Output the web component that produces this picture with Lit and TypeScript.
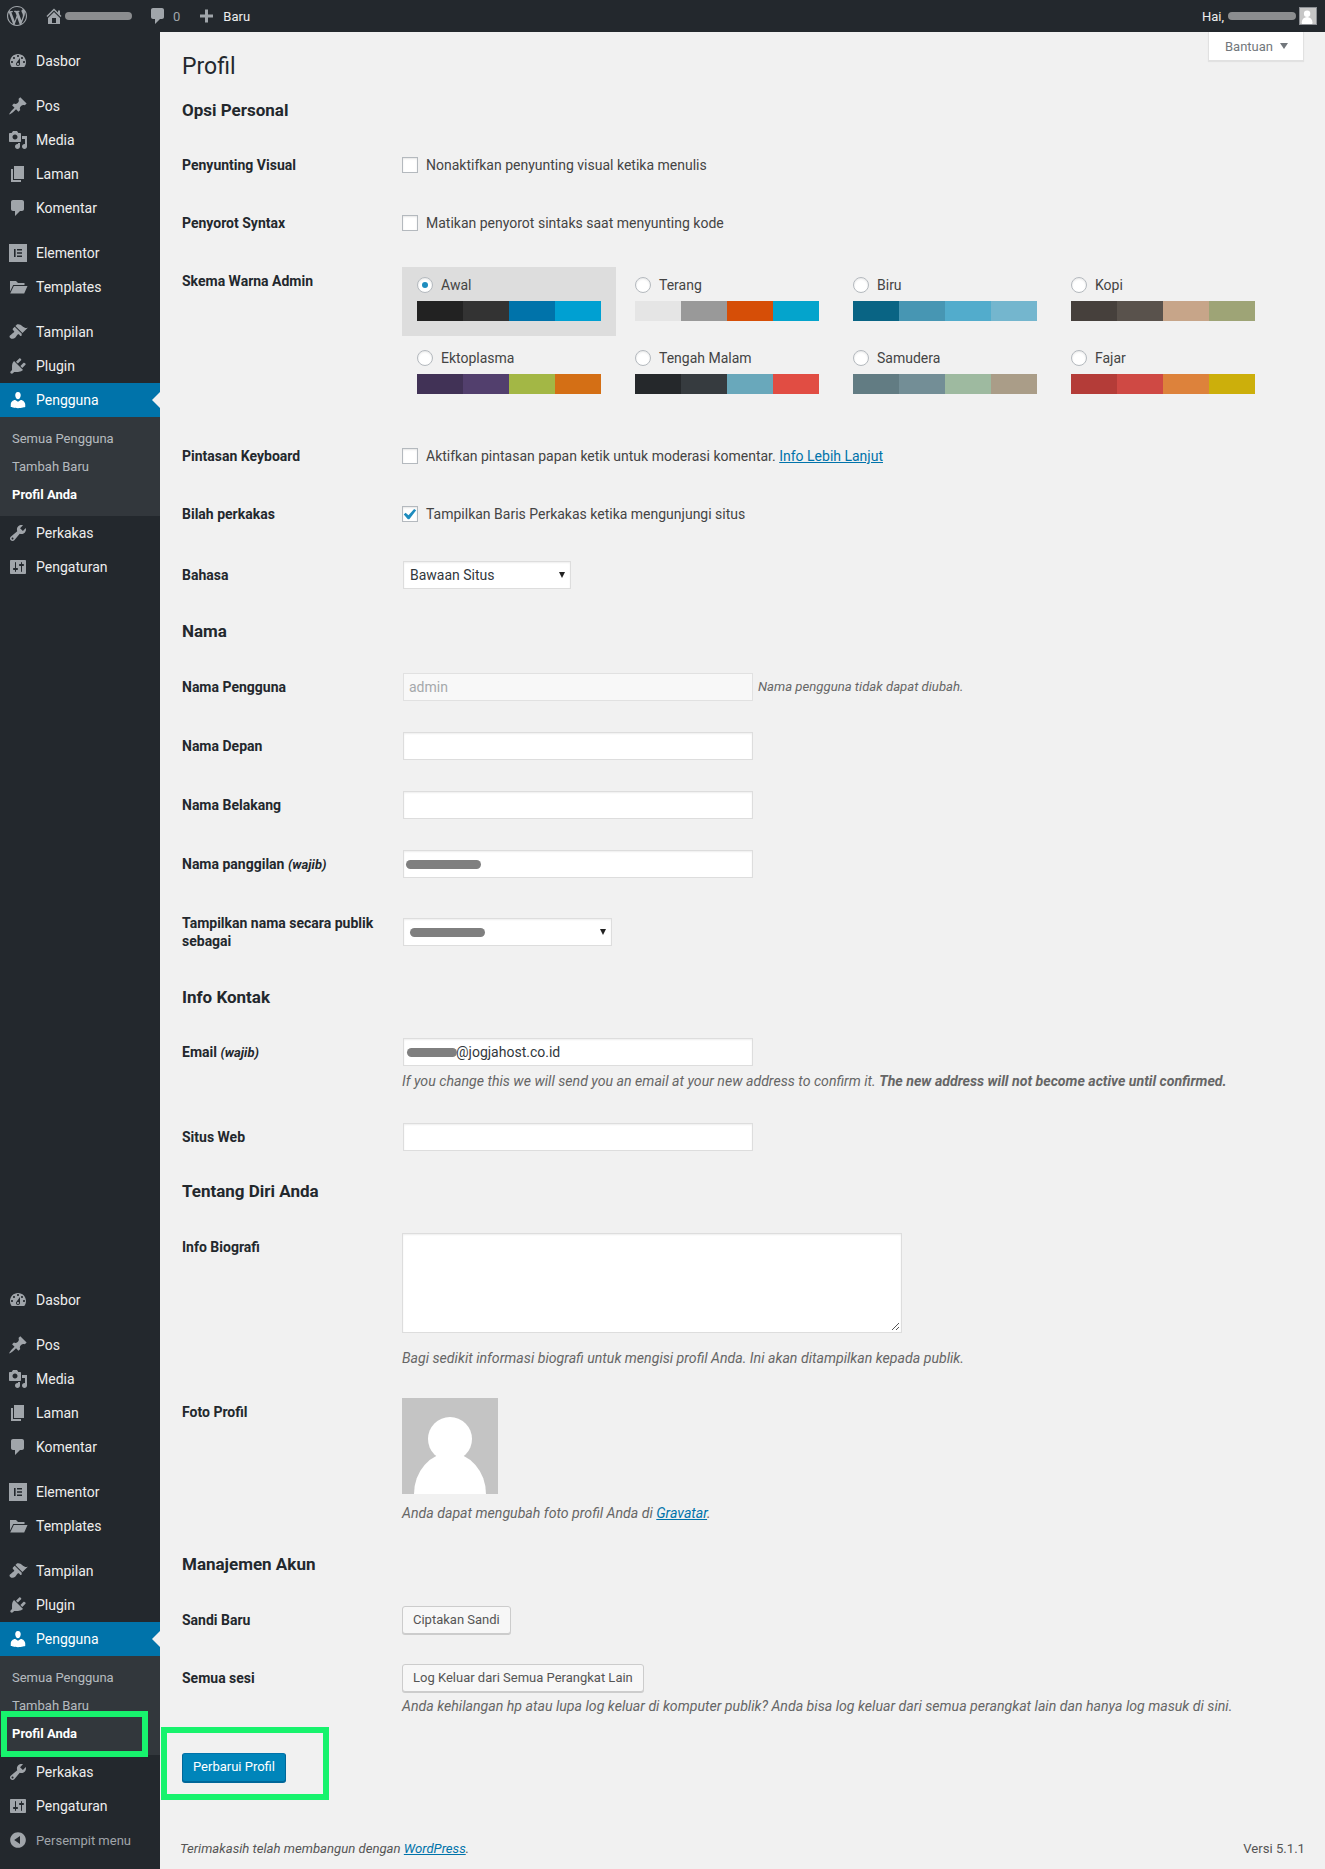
import { LitElement, html, css, svg } from "lit";
import { customElement } from "lit/decorators.js";

const P: Record<string, string> = {
  wp: "M20 10c0-5.51-4.49-10-10-10C4.48 0 0 4.49 0 10c0 5.52 4.48 10 10 10 5.51 0 10-4.48 10-10zM7.78 15.37L4.37 6.22c.55-.02 1.17-.08 1.17-.08.5-.06.44-1.13-.06-1.11 0 0-1.45.11-2.37.11-.18 0-.37 0-.58-.01C4.12 2.69 6.87 1.11 10 1.11c2.33 0 4.45.87 6.05 2.34-.68-.11-1.65.39-1.65 1.58 0 .74.45 1.36.9 2.1.35.61.55 1.36.55 2.46 0 1.49-1.4 5-1.4 5l-3.03-8.37c.54-.02.82-.17.82-.17.5-.05.44-1.25-.06-1.22 0 0-1.44.12-2.38.12-.87 0-2.33-.12-2.33-.12-.5-.03-.56 1.2-.06 1.22l.92.08 1.26 3.41zM17.41 10c.24-.64.74-1.87.43-4.25.7 1.29 1.05 2.71 1.05 4.25 0 3.29-1.73 6.24-4.4 7.78.97-2.59 1.94-5.2 2.92-7.78zM6.1 18.09C3.12 16.65 1.11 13.53 1.11 10c0-1.3.23-2.48.72-3.59C3.25 10.3 4.67 14.2 6.1 18.09zm4.03-6.63l2.58 6.98c-.86.29-1.76.45-2.71.45-.79 0-1.57-.11-2.29-.33.81-2.38 1.62-4.74 2.42-7.1z",
  dash: "M3.76 16h12.48c1.1-1.37 1.76-3.11 1.76-5 0-4.42-3.58-8-8-8s-8 3.58-8 8c0 1.89.66 3.63 1.76 5zM10 4c.55 0 1 .45 1 1s-.45 1-1 1-1-.45-1-1 .45-1 1-1zM6 6c.55 0 1 .45 1 1s-.45 1-1 1-1-.45-1-1 .45-1 1-1zm8 0c.55 0 1 .45 1 1s-.45 1-1 1-1-.45-1-1 .45-1 1-1zm-5.37 5.55L12 7v6c0 1.1-.9 2-2 2s-2-.9-2-2c0-.57.24-1.08.63-1.45zM4 10c.55 0 1 .45 1 1s-.45 1-1 1-1-.45-1-1 .45-1 1-1zm12 0c.55 0 1 .45 1 1s-.45 1-1 1-1-.45-1-1 .45-1 1-1zm-5 3c0-.55-.45-1-1-1s-1 .45-1 1 .45 1 1 1 1-.45 1-1z",
  post: "M10.44 3.02l1.82-1.82 6.36 6.35-1.83 1.82c-1.05-.68-2.48-.57-3.41.36l-.75.75c-.92.93-1.04 2.35-.35 3.41l-1.83 1.82-2.41-2.41-2.8 2.79c-.42.42-3.38 2.71-3.8 2.29s1.86-3.39 2.28-3.81l2.79-2.79L4.1 9.36l1.83-1.82c1.05.69 2.48.57 3.4-.36l.75-.75c.93-.92 1.05-2.35.36-3.41z",
  media: "M13 11V4c0-.55-.45-1-1-1h-1.67L9 1H5L3.67 3H2c-.55 0-1 .45-1 1v7c0 .55.45 1 1 1h10c.55 0 1-.45 1-1zM7 4.5c1.38 0 2.5 1.12 2.5 2.5S8.38 9.5 7 9.5 4.5 8.38 4.5 7 5.62 4.5 7 4.5zM14 6h5v10.5c0 1.38-1.12 2.5-2.5 2.5S14 17.88 14 16.5s1.12-2.5 2.5-2.5c.17 0 .34.02.5.05V9h-3V6zm-4 8.05V13h2v3.5c0 1.38-1.12 2.5-2.5 2.5S7 17.88 7 16.5 8.12 14 9.5 14c.17 0 .34.02.5.05z",
  page: "M6 15V2h10v13H6zm-1 1h8v2H3V5h2v11z",
  comment: "M5 2h9c1.1 0 2 .9 2 2v7c0 1.1-.9 2-2 2h-2l-5 5v-5H5c-1.1 0-2-.9-2-2V4c0-1.1.9-2 2-2z",
  elementor: "M1 1h18v18H1zM6 6v8h1.6V6zM9 6v1.6h5V6zM9 9.2v1.6h5V9.2zM9 12.4V14h5v-1.6z",
  folder: "M2 4h6l2 2h6.5v2H5.2L2 14.5zM5.8 9H19.5l-3.3 7.5H2.2z",
  appearance: "M14.48 11.06L7.41 3.99l1.5-1.5c.5-.56 2.3-.47 3.51.32 1.21.8 1.43 1.28 2.91 2.1 1.18.64 2.45 1.26 4.45.85zm-.71.71L6.7 4.7 4.93 6.47c-.39.39-.39 1.02 0 1.41l1.06 1.06c.39.39.39 1.03 0 1.42-.6.6-1.43 1.11-2.21 1.69-.35.26-.7.53-1.01.84C1.43 13.23.99 14.77 2.28 16s3.5 1.16 4.87-.2c.31-.31.58-.66.84-1.02.58-.78 1.09-1.61 1.69-2.21.39-.39 1.02-.39 1.41 0l1.06 1.06c.39.39 1.02.39 1.41 0z",
  plugin: "M13.11 4.36L9.87 7.6 8 5.73l3.24-3.24c.35-.34 1.05-.2 1.56.32.52.51.66 1.21.31 1.55zm-8 1.77l.91-1.12 9.01 9.01-1.19.84c-.71.71-2.63 1.16-3.82 1.16H6.14L4.9 17.26c-.59.59-1.54.59-2.12 0-.59-.58-.59-1.53 0-2.12l1.24-1.24v-3.88c0-1.13.4-3.19 1.09-3.89zm7.26 3.97l3.24-3.24c.34-.35 1.04-.21 1.55.31.52.51.66 1.21.31 1.55l-3.24 3.25z",
  users: "M10 9.25c-2.27 0-2.73-3.44-2.73-3.44C7 4.02 7.82 2 9.97 2c2.16 0 2.98 2.02 2.71 3.81 0 0-.41 3.44-2.68 3.44zm0 2.57L12.72 10c2.39 0 4.52 2.33 4.52 4.53v2.49s-3.65 1.13-7.24 1.13c-3.65 0-7.24-1.13-7.24-1.13v-2.49c0-2.25 1.94-4.48 4.47-4.48z",
  tools: "M16.68 9.77c-1.34 1.34-3.3 1.67-4.95.99l-5.41 6.52c-.99.99-2.59.99-3.58 0s-.99-2.59 0-3.57l6.52-5.42c-.68-1.65-.35-3.61.99-4.95 1.28-1.28 3.12-1.62 4.72-1.06l-2.89 2.89 2.82 2.82 2.86-2.87c.53 1.58.18 3.39-1.08 4.65zM3.81 16.21c.4.39 1.04.39 1.43 0 .4-.4.4-1.04 0-1.43-.39-.4-1.03-.4-1.43 0-.39.39-.39 1.03 0 1.43z",
  settings: "M18 16V4c0-.55-.45-1-1-1H3c-.55 0-1 .45-1 1v12c0 .55.45 1 1 1h14c.55 0 1-.45 1-1zM8 11h1c.55 0 1 .45 1 1s-.45 1-1 1H8v1.5c0 .28-.22.5-.5.5s-.5-.22-.5-.5V13H6c-.55 0-1-.45-1-1s.45-1 1-1h1V5.5c0-.28.22-.5.5-.5s.5.22.5.5V11zm5-2h-1c-.55 0-1-.45-1-1s.45-1 1-1h1V5.5c0-.28.22-.5.5-.5s.5.22.5.5V7h1c.55 0 1 .45 1 1s-.45 1-1 1h-1v5.5c0 .28-.22.5-.5.5s-.5-.22-.5-.5V9z",
  collapse: "M10 2.16c4.33 0 7.84 3.51 7.84 7.84s-3.51 7.84-7.84 7.84S2.16 14.33 2.16 10 5.71 2.16 10 2.16zm2 11.72V6.12L6.18 9.97z",
  home: "M16 8.5l1.53 1.53-1.06 1.06L10 4.62l-6.47 6.47-1.06-1.06L10 2.5l4 4v-2h2v4zm-6-2.46l6 5.99V18H4v-5.97zM12 17v-5H8v5h4z",
  plus: "M17 8.5v3h-5v5H9v-5H4v-3h5v-5h3v5h5z",
};

const icon = (name: string) =>
  html`<svg class="ic" viewBox="0 0 20 20" fill="currentColor" aria-hidden="true">${svg`<path fill-rule="evenodd" d=${P[name]}></path>`}</svg>`;

const SCHEMES: [string, string[]][] = [
  ["Awal", ["#222222", "#333333", "#0073aa", "#00a0d2"]],
  ["Terang", ["#e5e5e5", "#999999", "#d64e07", "#04a4cc"]],
  ["Biru", ["#096484", "#4796b3", "#52accc", "#74b6ce"]],
  ["Kopi", ["#46403c", "#59524c", "#c7a589", "#9ea476"]],
  ["Ektoplasma", ["#413256", "#523f6d", "#a3b745", "#d46f15"]],
  ["Tengah Malam", ["#25282b", "#363b3f", "#69a8bb", "#e14d43"]],
  ["Samudera", ["#627c83", "#738e96", "#9ebaa0", "#aa9d88"]],
  ["Fajar", ["#b43c38", "#cf4944", "#dd823b", "#ccaf0b"]],
];

const MENU: (string | [string, string, boolean?])[] = [
  "gap-a",
  ["dash", "Dasbor"],
  "sep",
  ["post", "Pos"],
  ["media", "Media"],
  ["page", "Laman"],
  ["comment", "Komentar"],
  "sep",
  ["elementor", "Elementor"],
  ["folder", "Templates"],
  "sep",
  ["appearance", "Tampilan"],
  ["plugin", "Plugin"],
  ["users", "Pengguna", true],
  "sub",
  ["tools", "Perkakas"],
  ["settings", "Pengaturan"],
];

@customElement("app-root")
export class AppRoot extends LitElement {
  static styles = css`
    :host { display: block; font-family: Roboto, "Liberation Sans", sans-serif; font-size: 14px; color: #444; }
    * { box-sizing: border-box; }
    .shell { position: relative; width: 1325px; height: 1869px; overflow: hidden; background: #f1f1f1; display: flex; flex-direction: column; }
    .ic { width: 20px; height: 20px; flex: none; display: block; }

    .bar { height: 32px; flex: none; background: #23282d; color: #eee; font-size: 13px; display: flex; align-items: center; }
    .bar .wp { margin-left: 7px; color: #a0a5aa; }
    .bar .home { margin-left: 17px; color: #a0a5aa; width: 20px; }
    .bar .cm { margin-left: 16px; width: 20px; color: #a0a5aa; }
    .bar .zero { margin-left: 5px; color: #a0a5aa; }
    .bar .plus { margin-left: 16px; color: #a0a5aa; }
    .bar .baru { margin-left: 7px; }
    .bar .spacer { flex: 1; }
    .pill { display: block; background: #7f7f7f; border-radius: 6px; }
    .bar .p1 { width: 67px; height: 8px; margin-left: 1px; background: #8b8d8f; }
    .bar .p2 { width: 68px; height: 8px; margin: 0 3px 0 4px; background: #8b8d8f; }
    .avatar { width: 18px; height: 18px; margin-right: 8px; background: #c6c6c6; border: 1px solid #8c8f94; overflow: hidden; display: block; }

    .body { flex: 1; display: flex; min-height: 0; }
    .side { width: 160px; flex: none; background: #23282d; color: #eee; display: flex; flex-direction: column; }
    .m { height: 34px; display: flex; align-items: center; padding-left: 8px; gap: 8px; position: relative; flex: none; }
    .m .ic { color: #a0a5aa; }
    .m.on { background: #0073aa; color: #fff; }
    .m.on .ic { color: #fff; }
    .m.on::after { content: ""; position: absolute; right: 0; top: 50%; margin-top: -8px; border: 8px solid transparent; border-right-color: #f1f1f1; border-left: 0; }
    .gap-a { height: 12px; flex: none; }
    .sep { height: 11px; flex: none; }
    .sub { background: #32373c; padding: 8px 0 7px; font-size: 13px; color: rgba(240,245,250,.7); flex: none; height: 99px; }
    .sub div { height: 28px; line-height: 28px; padding-left: 12px; }
    .sub .cur { color: #fff; font-weight: 700; }
    .second { margin-top: 687px; flex: none; }
    .collapse { color: #a0a5aa; font-size: 13px; }

    .main { flex: 1; padding: 0 0 0 22px; position: relative; min-width: 0; }
    .help { position: absolute; right: 21px; top: 0; width: 96px; height: 29px; background: #fff; border: 1px solid #e1e1e1; border-top: 0; box-shadow: 0 1px 1px rgba(0,0,0,.06); color: #72777c; font-size: 13px; display: flex; align-items: center; padding-left: 16px; gap: 7px; }
    .help i { border: 4.5px solid transparent; border-top: 6px solid #72777c; border-bottom: 0; }
    h1 { font-size: 23px; font-weight: 400; color: #23282d; line-height: 29px; margin: 20px 0 0; }
    h2 { font-size: 17px; font-weight: 700; color: #23282d; line-height: 20px; margin: 0; padding: 18px 0 17px; }
    h2.first { padding: 19px 0 16px; }
    h2.t17 { padding: 17px 0 17px; }
    h2.t16 { padding: 16px 0 17px; }
    h2.contact { padding: 17px 0 16px; }
    h2.about { padding: 14px 0 17px; }
    .row { display: grid; grid-template-columns: 220px 1fr; }
    .th { padding: 20px 10px 20px 0; font-weight: 700; color: #23282d; line-height: 18px; }
    .th em { font-size: 13px; }
    .td { padding: 15px 0; min-height: 58px; }
    .row.pb18 .td { padding-bottom: 18px; }
    .row.pt24 .td { padding-top: 24px; }
    .check { display: flex; align-items: center; gap: 8px; height: 28px; color: #444; }
    .box { width: 16px; height: 16px; border: 1px solid #b4b9be; background: #fff; box-shadow: inset 0 1px 2px rgba(0,0,0,.1); flex: none; display: block; }
    .box svg { display: block; width: 14px; height: 14px; }
    a { color: #0073aa; text-decoration: underline; }

    .schemes { display: grid; grid-template-columns: repeat(4, 218px); row-gap: 4px; }
    .scheme { width: 214px; height: 69px; padding: 10px 15px 0; }
    .scheme.sel { background: #dddddd; }
    .scheme .t { display: flex; align-items: center; height: 16px; gap: 8px; margin-bottom: 8px; color: #444; }
    .radio { width: 16px; height: 16px; border-radius: 50%; border: 1px solid #b4b9be; background: #fff; box-shadow: inset 0 1px 2px rgba(0,0,0,.1); display: flex; align-items: center; justify-content: center; }
    .radio i { width: 6px; height: 6px; border-radius: 50%; background: #1e8cbe; }
    .pal { display: flex; height: 20px; }
    .pal span { width: 46px; display: block; }

    .f { position: relative; display: inline-block; vertical-align: top; }
    input, .sel-f select { font: inherit; height: 28px; border: 1px solid #ddd; background: #fff; color: #32373c; box-shadow: inset 0 1px 2px rgba(0,0,0,.07); padding: 3px 5px; margin: 0 0 1px 1px; display: block; border-radius: 0; outline: none; }
    input { width: 350px; }
    input.ro { background: #f8f8f8; color: #a5a8ab; border-color: #e1e1e1; box-shadow: none; }
    input.mail { padding-left: 52px; }
    .red { position: absolute; left: 4px; top: 10px; height: 9px; }
    .r1 { width: 75px; }
    .r2 { width: 75px; left: 8px; }
    .r3 { width: 50px; left: 5px; }
    .sel-f select { appearance: none; -webkit-appearance: none; padding: 2px 6px; margin-bottom: 0; }
    .s1 select { width: 168px; }
    .s2 select { width: 209px; }
    .sel-f::after { content: ""; position: absolute; right: 6px; top: 11px; border: 3.5px solid transparent; border-top: 6px solid #222; border-bottom: 0; }
    .inl { display: flex; align-items: flex-start; height: 29px; }
    .note { font-style: italic; color: #666; }
    .inl .note { font-size: 13.15px; line-height: 28px; margin-left: 5px; }
    p.note { margin: 4px 0 1px; line-height: 20px; font-size: 14.15px; }
    p.note.mail-note { margin: 4px 0 2px; }
    p.note.ta-note { margin: 15px 0 0; }
    p.note.pic-note { margin: 9px 0 0; }
    .ta { width: 500px; height: 100px; background: #fff; border: 1px solid #ddd; box-shadow: inset 0 1px 2px rgba(0,0,0,.07); position: relative; }
    .ta svg { position: absolute; right: 1px; bottom: 1px; width: 10px; height: 10px; }
    .pic { width: 96px; height: 96px; display: block; }
    .btn { display: inline-block; height: 28px; font: 13px/26px Roboto, sans-serif; padding: 0 10px; background: #f7f7f7; border: 1px solid #ccc; border-radius: 3px; box-shadow: 0 1px 0 #ccc; color: #555; }
    .pri { background: #0085ba; border-color: #0073aa #006799 #006799; box-shadow: 0 1px 0 #006799; color: #fff; height: 29px; display: block; width: 104px; padding: 0; text-align: center; }
    .sub-wrap { padding-top: 21px; }
    .foot { position: absolute; left: 20px; right: 20px; top: 1808px; display: flex; justify-content: space-between; font-size: 13.15px; color: #555; line-height: 18px; }
    .foot em a { color: #0073aa; }

    .mark { position: absolute; border: 6px solid #17f36d; pointer-events: none; }
    .mk1 { left: 1px; top: 1711px; width: 147px; height: 46px; }
    .mk2 { left: 161px; top: 1727px; width: 168px; height: 73px; }
  `;

  private menu() {
    return MENU.map((m) => {
      if (m === "gap-a") return html`<div class="gap-a"></div>`;
      if (m === "sep") return html`<div class="sep"></div>`;
      if (m === "sub")
        return html`<div class="sub"><div>Semua Pengguna</div><div>Tambah Baru</div><div class="cur">Profil Anda</div></div>`;
      const [ic, label, on] = m as [string, string, boolean?];
      return html`<div class="m ${on ? "on" : ""}">${icon(ic)}<span>${label}</span></div>`;
    });
  }

  private row(label: unknown, content: unknown, cls = "") {
    return html`<div class="row ${cls}"><div class="th">${label}</div><div class="td">${content}</div></div>`;
  }

  private check(text: unknown, on = false) {
    return html`<label class="check"><span class="box">${on
      ? html`<svg viewBox="4.5 4 13 11"><path fill="#1e8cbe" d="M14.83 4.89l1.9 1.1-6.37 8.5H9.02L5.2 9.9l1.7-1.5 2.7 2.2z"/></svg>`
      : ""}</span><span>${text}</span></label>`;
  }

  render() {
    return html`
      <div class="shell">
        <div class="bar">
          <span class="wp">${icon("wp")}</span>
          <span class="home">${icon("home")}</span>
          <span class="pill p1"></span>
          <span class="cm">${icon("comment")}</span>
          <span class="zero">0</span>
          <span class="plus">${icon("plus")}</span>
          <span class="baru">Baru</span>
          <span class="spacer"></span>
          <span>Hai,</span>
          <span class="pill p2"></span>
          <svg class="avatar" viewBox="0 0 18 18"><circle cx="8" cy="6.5" r="3.6" fill="#fff"/><ellipse cx="8" cy="16" rx="6" ry="6" fill="#fff"/></svg>
        </div>
        <div class="body">
          <nav class="side">
            ${this.menu()}
            <div class="second">${this.menu()}</div>
            <div class="m collapse">${icon("collapse")}<span>Persempit menu</span></div>
          </nav>
          <main class="main">
            <div class="help">Bantuan <i></i></div>
            <h1>Profil</h1>
            <h2 class="first">Opsi Personal</h2>
            ${this.row("Penyunting Visual", this.check("Nonaktifkan penyunting visual ketika menulis"))}
            ${this.row("Penyorot Syntax", this.check("Matikan penyorot sintaks saat menyunting kode"))}
            ${this.row(
              "Skema Warna Admin",
              html`<div class="schemes">
                ${SCHEMES.map(
                  ([n, cs], i) => html`<div class="scheme ${i === 0 ? "sel" : ""}">
                    <div class="t"><span class="radio">${i === 0 ? html`<i></i>` : ""}</span><span>${n}</span></div>
                    <div class="pal">${cs.map((c) => html`<span style="background:${c}"></span>`)}</div>
                  </div>`
                )}
              </div>`,
              "pb18"
            )}
            ${this.row(
              "Pintasan Keyboard",
              this.check(html`Aktifkan pintasan papan ketik untuk moderasi komentar. <a href="#">Info Lebih Lanjut</a>`)
            )}
            ${this.row("Bilah perkakas", this.check("Tampilkan Baris Perkakas ketika mengunjungi situs", true), "pb18")}
            ${this.row("Bahasa", html`<span class="f sel-f s1"><select><option>Bawaan Situs</option></select></span>`)}
            <h2 class="t17">Nama</h2>
            ${this.row(
              "Nama Pengguna",
              html`<div class="inl"><input class="ro" value="admin" disabled /><span class="note">Nama pengguna tidak dapat diubah.</span></div>`
            )}
            ${this.row("Nama Depan", html`<input />`)}
            ${this.row("Nama Belakang", html`<input />`)}
            ${this.row(
              html`Nama panggilan <em>(wajib)</em>`,
              html`<span class="f"><input /><span class="pill red r1"></span></span>`
            )}
            ${this.row(
              "Tampilkan nama secara publik sebagai",
              html`<span class="f sel-f s2"><select><option></option></select><span class="pill red r2"></span></span>`,
              "pt24"
            )}
            <h2 class="contact">Info Kontak</h2>
            ${this.row(
              html`Email <em>(wajib)</em>`,
              html`<span class="f"><input class="mail" value="@jogjahost.co.id" /><span class="pill red r3"></span></span>
                <p class="note mail-note">If you change this we will send you an email at your new address to confirm it. <b>The new address will not become active until confirmed.</b></p>`
            )}
            ${this.row("Situs Web", html`<input />`)}
            <h2 class="about">Tentang Diri Anda</h2>
            ${this.row(
              "Info Biografi",
              html`<div class="ta"><svg viewBox="0 0 10 10"><path d="M9 2L2 9M9 6L6 9" stroke="#555" stroke-width="1" fill="none"/></svg></div>
                <p class="note ta-note">Bagi sedikit informasi biografi untuk mengisi profil Anda. Ini akan ditampilkan kepada publik.</p>`
            )}
            ${this.row(
              "Foto Profil",
              html`<svg class="pic" viewBox="0 0 96 96"><rect width="96" height="96" fill="#c4c4c4"/><circle cx="48" cy="41" r="22" fill="#fff"/><ellipse cx="48" cy="96" rx="36" ry="41" fill="#fff"/></svg>
                <p class="note pic-note">Anda dapat mengubah foto profil Anda di <a href="#">Gravatar</a>.</p>`
            )}
            <h2 class="t16">Manajemen Akun</h2>
            ${this.row("Sandi Baru", html`<span class="btn">Ciptakan Sandi</span>`)}
            ${this.row(
              "Semua sesi",
              html`<span class="btn">Log Keluar dari Semua Perangkat Lain</span>
                <p class="note">Anda kehilangan hp atau lupa log keluar di komputer publik? Anda bisa log keluar dari semua perangkat lain dan hanya log masuk di sini.</p>`
            )}
            <div class="sub-wrap"><span class="btn pri">Perbarui Profil</span></div>
            <div class="foot">
              <em>Terimakasih telah membangun dengan <a href="#">WordPress</a>.</em>
              <span>Versi 5.1.1</span>
            </div>
          </main>
        </div>
        <div class="mark mk1"></div>
        <div class="mark mk2"></div>
      </div>
    `;
  }
}
